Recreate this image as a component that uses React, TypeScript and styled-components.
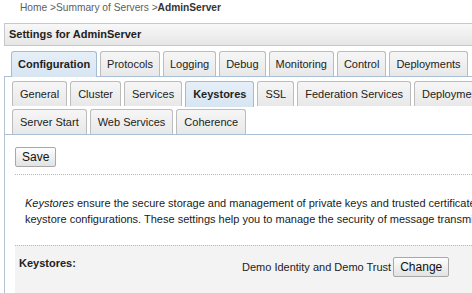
import styled, { createGlobalStyle } from "styled-components";

const GlobalStyle = createGlobalStyle`
  body {
    margin: 0;
    overflow: hidden;

    font-family: "Liberation Sans", Arial, sans-serif;
    font-size: 11px;
    color: #222;

    background-color: #fff;
  }
`;

const Page = styled.div`
  width: 810px;
`;

const Breadcrumb = styled.div`
  height: 23px;
  padding: 1px 0 0 20px;
  box-sizing: border-box;

  font-size: 10.2px;
  line-height: 13px;
  color: #5e5e5e;

  b {
    color: #333;
  }
`;

const Panel = styled.section`
  margin-left: 4px;
`;

const PanelHeader = styled.h2`
  margin: 0;
  height: 21px;
  padding-left: 4px;

  font-size: 11px;
  line-height: 21px;
  font-weight: bold;
  color: #222;

  background: linear-gradient(#f8f8f8, #e6e6e6);
  border: 1px solid #c8c8c8;
`;

const TabStrip = styled.nav`
  display: flex;
  flex-wrap: wrap;
  align-items: flex-end;
  gap: ${(p) => p.$rowGap ?? 0}px 3px;
  padding: ${(p) => p.$top}px 0 0 7px;
`;

const Tab = styled.div`
  position: relative;
  z-index: ${(p) => (p.$active ? 1 : 0)};
  height: ${(p) => (p.$active ? 25 : 24)}px;
  margin-bottom: ${(p) => (p.$active ? -1 : 0)}px;
  padding: 0 ${(p) => p.$pad ?? 7}px;

  font-weight: ${(p) => (p.$active ? "bold" : "normal")};
  line-height: 24px;
  white-space: nowrap;
  color: #222;

  background: ${(p) =>
    p.$active
      ? "linear-gradient(#e6eff8, #d7e5f2)"
      : "linear-gradient(#f6f6f6, #e8e8e8)"};
  border: 1px solid ${(p) => (p.$active ? "#a3bcd5" : "#bcbcbc")};
  border-bottom: none;
  border-radius: 3px 3px 0 0;
`;

const TabContent = styled.div`
  border-top: 1px solid #a9bfd5;
  border-left: 1px solid #b3c3d3;
`;

const SubTabs = styled(TabStrip)`
  border-bottom: 1px solid #a9bfd5;
`;

const Body = styled.div`
  padding-left: 10px;
`;

const Actions = styled.div`
  padding: 12px 0 7px;
  border-bottom: 1px dotted #b8b8b8;
`;

const Button = styled.button`
  height: 20px;
  padding: 0 6px;

  font-family: "Liberation Sans", Arial, sans-serif;
  font-size: 12px;
  color: #111;

  background: linear-gradient(#fdfdfd, #e2e2e2);
  border: 1px solid #a8a8a8;
  border-radius: 2px;
`;

const Intro = styled.p`
  margin: 20px 0 18px;
  padding-left: 10px;

  line-height: 16px;
  white-space: nowrap;
  color: #1a1a1a;
`;

const Settings = styled.div`
  min-height: 60px;
  background-color: #f3f3f3;
  border-top: 1px dotted #b8b8b8;
`;

const Row = styled.div`
  display: grid;
  grid-template-columns: 227px auto;
`;

const Label = styled.div`
  padding: 10px 0 0 4px;
  font-weight: bold;
  line-height: 14px;
`;

const Value = styled.div`
  display: flex;
  align-items: center;
  gap: 2px;
  padding-top: 11px;
`;

const mainTabs = [
  "Configuration",
  "Protocols",
  "Logging",
  "Debug",
  "Monitoring",
  "Control",
  "Deployments",
];

const subTabs = [
  "General",
  "Cluster",
  "Services",
  "Keystores",
  "SSL",
  "Federation Services",
  "Deployment",
  "Migration",
  "Tuning",
  "Overload",
  "Health Monitoring",
  "Server Start",
  "Web Services",
  "Coherence",
];

const App = () => {
  return (
    <Page>
      <GlobalStyle />
      <Breadcrumb>
        Home &gt;Summary of Servers &gt;<b>AdminServer</b>
      </Breadcrumb>

      <Panel>
        <PanelHeader>Settings for AdminServer</PanelHeader>

        <TabStrip $top={5}>
          {mainTabs.map((t) => (
            <Tab key={t} $pad={6} $active={t === "Configuration"}>
              {t}
            </Tab>
          ))}
        </TabStrip>

        <TabContent>
          <SubTabs $top={4} $rowGap={3}>
            {subTabs.map((t) => (
              <Tab key={t} $active={t === "Keystores"}>
                {t}
              </Tab>
            ))}
          </SubTabs>

          <Body>
            <Actions>
              <Button>Save</Button>
            </Actions>

            <Intro>
              <i>Keystores</i> ensure the secure storage and management of
              private keys and trusted certificate authorities (CAs). This page
              lets you view and define various
              <br />
              keystore configurations. These settings help you to manage the
              security of message transmissions.
            </Intro>

            <Settings>
              <Row>
                <Label>Keystores:</Label>
                <Value>
                  Demo Identity and Demo Trust
                  <Button>Change</Button>
                </Value>
              </Row>
            </Settings>
          </Body>
        </TabContent>
      </Panel>
    </Page>
  );
};

export default App;
